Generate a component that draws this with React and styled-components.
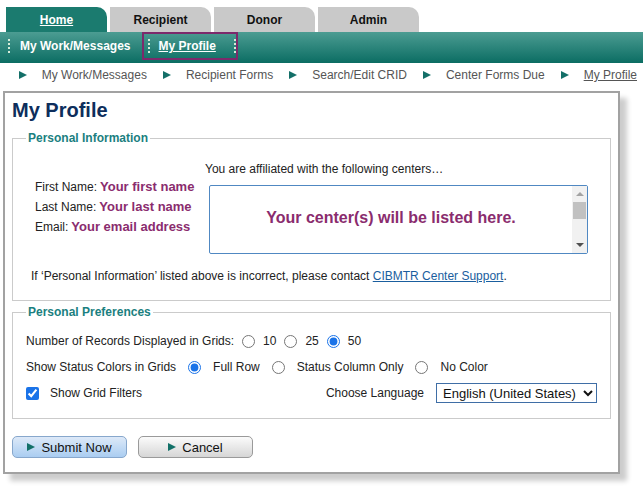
import styled, { createGlobalStyle } from "styled-components";

const GlobalStyle = createGlobalStyle`
  html, body {
    margin: 0;
    padding: 0;
    background: #fff;
  }
  body {
    font-family: "Liberation Sans", Arial, sans-serif;
    font-size: 12px;
    color: #222;
  }
`;

const Page = styled.div`
  width: 643px;
  height: 488px;
  overflow: hidden;
`;

const TabRow = styled.div`
  display: flex;
  gap: 3px;
  padding: 7px 0 0 6px;
`;

const Tab = styled.div`
  width: 101px;
  height: 25px;
  display: flex;
  align-items: center;
  justify-content: center;
  border-radius: 0 10px 0 0;
  font-size: 12px;
  font-weight: bold;
  background: ${(p) => (p.$active ? "#1b7b6f" : "#c9c9c9")};
  color: ${(p) => (p.$active ? "#fff" : "#111")};
  text-decoration: ${(p) => (p.$active ? "underline" : "none")};
`;

const NavBar = styled.div`
  height: 31px;
  display: flex;
  align-items: flex-start;
  padding-left: 8px;
  background: linear-gradient(#4c9c92, #0b6d63);
`;

const Sep = styled.span`
  display: block;
  height: 14px;
  border-left: 2px dotted #d6ecd9;
  margin-top: ${(p) => p.$top || 7}px;
`;

const NavItem = styled.span`
  color: #fff;
  font-weight: bold;
  font-size: 12px;
  line-height: 28px;
  white-space: nowrap;
  margin: ${(p) => p.$margin};
  text-decoration: ${(p) => (p.$current ? "underline" : "none")};
`;

const Highlight = styled.div`
  display: flex;
  align-items: flex-start;
  height: 24px;
  border: 2px solid #7c2a6b;
  padding-left: 4px;
  margin-left: 11px;
`;

const Crumbs = styled.div`
  display: flex;
  justify-content: flex-end;
  align-items: center;
  height: 18px;
  margin: 3px 0 7px;
  padding-right: 6px;
  font-size: 12px;
  color: #555;
  white-space: nowrap;
`;

const Arrow = styled.span`
  flex-shrink: 0;
  width: 0;
  height: 0;
  border-left: 8px solid #136f68;
  border-top: 4px solid transparent;
  border-bottom: 4px solid transparent;
  margin: 0 15px 0 16px;
`;

const Crumb = styled.span`
  flex-shrink: 0;
  text-decoration: ${(p) => (p.$current ? "underline" : "none")};
`;

const Panel = styled.div`
  width: 613px;
  margin-left: 3px;
  border: 2px solid #a2a2a2;
  padding: 5px 0 14px;
  box-shadow: 7px 7px 5px rgba(0, 0, 0, 0.2);
  background: #fff;
`;

const Title = styled.h1`
  margin: 0 0 0 7px;
  font-size: 20px;
  line-height: 24px;
  font-weight: bold;
  color: #0d2e5c;
`;

const Fieldset = styled.fieldset`
  margin: ${(p) => p.$top}px 7px 0;
  padding: 0;
  border: 1px solid #cbcbcb;
  min-width: 0;
`;

const Legend = styled.legend`
  margin-left: 13px;
  padding: 0 2px;
  font-size: 12px;
  line-height: 14px;
  font-weight: bold;
  color: #1b7f80;
`;

const FieldBody = styled.div`
  padding: ${(p) => p.$pad};
`;

const InfoRow = styled.div`
  display: flex;
`;

const Labels = styled.div`
  flex-shrink: 0;
  width: 170px;
  padding: 32px 0 0 22px;
`;

const LabelRow = styled.div`
  line-height: 19px;
  white-space: nowrap;
  font-size: 12px;
  color: #222;
`;

const Value = styled.span`
  font-size: 13px;
  font-weight: bold;
  color: #8a2c6e;
  margin-left: 3px;
`;

const Centers = styled.div`
  flex: 1;
  padding: 17px 22px 0 0;
`;

const CentersHead = styled.div`
  line-height: 14px;
`;

const CenterBox = styled.div`
  display: flex;
  height: 67px;
  margin: 9px 0 0 4px;
  border: 1px solid #5088c2;
  border-radius: 2px;
`;

const CenterText = styled.div`
  flex: 1;
  display: flex;
  align-items: center;
  justify-content: center;
  font-size: 16px;
  font-weight: bold;
  color: #8a2c6e;
  padding-bottom: 4px;
`;

const Scrollbar = styled.div`
  width: 15px;
  display: flex;
  flex-direction: column;
  align-items: center;
  background: #f1f1f1;
`;

const ScrollArrow = styled.span`
  width: 0;
  height: 0;
  border-left: 4px solid transparent;
  border-right: 4px solid transparent;
  ${(p) =>
    p.$up
      ? "border-bottom: 4px solid #a3a3a3; margin-top: 6px;"
      : "border-top: 4px solid #505050; margin-top: auto; margin-bottom: 6px;"}
`;

const Thumb = styled.span`
  width: 13px;
  height: 17px;
  margin-top: 6px;
  background: #c1c1c1;
`;

const Notice = styled.div`
  line-height: 14px;
  margin-top: 15px;
  padding-left: 18px;
`;

const Link = styled.a`
  color: #1a5e9e;
  text-decoration: underline;
`;

const PrefRow = styled.div`
  display: flex;
  align-items: center;
  height: 26px;
  white-space: nowrap;
`;

const Option = styled.label`
  display: inline-flex;
  align-items: center;
  gap: ${(p) => p.$gap}px;
  margin-left: ${(p) => p.$gap}px;
`;

const Radio = styled.input.attrs({ type: "radio" })`
  width: 13px;
  height: 13px;
  margin: 0;
  accent-color: #1a73e8;
`;

const Check = styled.input.attrs({ type: "checkbox" })`
  width: 13px;
  height: 13px;
  margin: 0 11px 0 0;
  accent-color: #1a73e8;
`;

const LangLabel = styled.span`
  margin-left: auto;
  margin-right: 12px;
`;

const Select = styled.select`
  width: 161px;
  height: 20px;
  font-family: "Liberation Sans", Arial, sans-serif;
  font-size: 13px;
  color: #111;
  border: 1px solid #3f6ea6;
  border-radius: 0;
  padding: 0 2px;
  background: #fff;
`;

const Buttons = styled.div`
  display: flex;
  gap: 11px;
  margin: 17px 0 0 7px;
`;

const Button = styled.button`
  width: 115px;
  height: 22px;
  display: flex;
  align-items: center;
  justify-content: center;
  gap: 6px;
  font-family: "Liberation Sans", Arial, sans-serif;
  font-size: 13px;
  color: #111;
  border-radius: 5px;
  border: 1px solid ${(p) => (p.$primary ? "#87a7cc" : "#9a9a9a")};
  background: ${(p) =>
    p.$primary
      ? "linear-gradient(#dde9f8, #aacdf1)"
      : "linear-gradient(#fbfbfb, #d6d6d6)"};
  padding: 0;
`;

const BtnArrow = styled.span`
  width: 0;
  height: 0;
  border-left: 8px solid #127068;
  border-top: 4.5px solid transparent;
  border-bottom: 4.5px solid transparent;
`;

const crumbs = [
  "My Work/Messages",
  "Recipient Forms",
  "Search/Edit CRID",
  "Center Forms Due",
  "My Profile",
];

const App = () => {
  return (
    <Page>
      <GlobalStyle />
      <TabRow>
        <Tab $active>Home</Tab>
        <Tab>Recipient</Tab>
        <Tab>Donor</Tab>
        <Tab>Admin</Tab>
      </TabRow>
      <NavBar>
        <Sep />
        <NavItem $margin="0 0 0 10px">My Work/Messages</NavItem>
        <Highlight>
          <Sep $top={5} />
          <NavItem $margin="-2px 18px 0 9px" $current>
            My Profile
          </NavItem>
          <Sep $top={5} />
        </Highlight>
      </NavBar>

      <Crumbs>
        {crumbs.map((c, i) => [
          <Arrow key={c + "-a"} />,
          <Crumb key={c} $current={i === crumbs.length - 1}>
            {c}
          </Crumb>,
        ])}
      </Crumbs>

      <Panel>
        <Title>My Profile</Title>

        <Fieldset $top={9}>
          <Legend>Personal Information</Legend>
          <FieldBody $pad="0 0 17px 0">
            <InfoRow>
              <Labels>
                <LabelRow>
                  First Name:<Value>Your first name</Value>
                </LabelRow>
                <LabelRow>
                  Last Name:<Value>Your last name</Value>
                </LabelRow>
                <LabelRow>
                  Email:<Value>Your email address</Value>
                </LabelRow>
              </Labels>
              <Centers>
                <CentersHead>
                  You are affiliated with the following centers…
                </CentersHead>
                <CenterBox>
                  <CenterText>Your center(s) will be listed here.</CenterText>
                  <Scrollbar>
                    <ScrollArrow $up />
                    <Thumb />
                    <ScrollArrow />
                  </Scrollbar>
                </CenterBox>
              </Centers>
            </InfoRow>
            <Notice>
              If ‘Personal Information’ listed above is incorrect, please
              contact <Link>CIBMTR Center Support</Link>.
            </Notice>
          </FieldBody>
        </Fieldset>

        <Fieldset $top={4}>
          <Legend>Personal Preferences</Legend>
          <FieldBody $pad="9px 13px 12px 13px">
            <PrefRow>
              Number of Records Displayed in Grids:
              <Option $gap={8}>
                <Radio name="rec" />
                10
              </Option>
              <Option $gap={8}>
                <Radio name="rec" />
                25
              </Option>
              <Option $gap={8}>
                <Radio name="rec" defaultChecked />
                50
              </Option>
            </PrefRow>
            <PrefRow>
              Show Status Colors in Grids
              <Option $gap={12}>
                <Radio name="col" defaultChecked />
                Full Row
              </Option>
              <Option $gap={12}>
                <Radio name="col" />
                Status Column Only
              </Option>
              <Option $gap={12}>
                <Radio name="col" />
                No Color
              </Option>
            </PrefRow>
            <PrefRow>
              <Check defaultChecked />
              Show Grid Filters
              <LangLabel>Choose Language</LangLabel>
              <Select defaultValue="en-US">
                <option value="en-US">English (United States)</option>
              </Select>
            </PrefRow>
          </FieldBody>
        </Fieldset>

        <Buttons>
          <Button $primary>
            <BtnArrow />
            Submit Now
          </Button>
          <Button>
            <BtnArrow />
            Cancel
          </Button>
        </Buttons>
      </Panel>
    </Page>
  );
};

export default App;
